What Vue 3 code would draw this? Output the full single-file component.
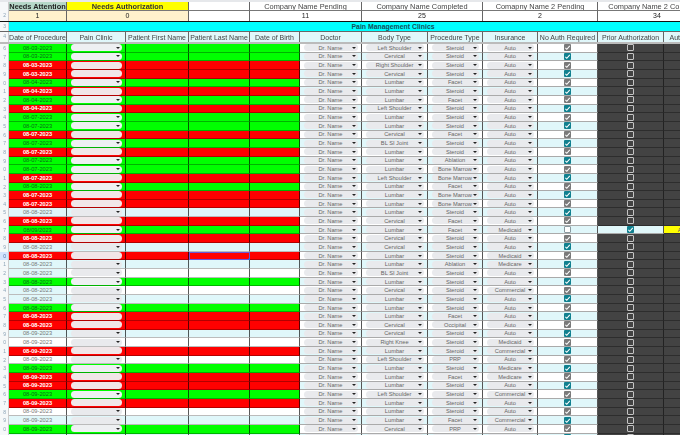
<script setup>
// status | date | body | procedure | insurance
const raw = `g|08-03-2023|Left Shoulder|Steroid|Auto
g|08-03-2023|Cervical|Steroid|Auto
r|08-03-2023|Right Shoulder|Steroid|Auto
r|08-03-2023|Cervical|Steroid|Auto
g|08-04-2023|Lumbar|Facet|Auto
r|08-04-2023|Lumbar|Steroid|Auto
g|08-04-2023|Lumbar|Facet|Auto
r|08-04-2023|Left Shoulder|Steroid|Auto
g|08-07-2023|Lumbar|Steroid|Auto
g|08-07-2023|Lumbar|Steroid|Auto
r|08-07-2023|Cervical|Facet|Auto
g|08-07-2023|BL SI Joint|Steroid|Auto
r|08-07-2023|Lumbar|Steroid|Auto
g|08-07-2023|Lumbar|Ablation|Auto
g|08-07-2023|Lumbar|Bone Marrow|Auto
r|08-07-2023|Left Shoulder|Bone Marrow|Auto
g|08-08-2023|Lumbar|Facet|Auto
r|08-07-2023|Lumbar|Bone Marrow|Auto
r|08-07-2023|Lumbar|Bone Marrow|Auto
b|08-08-2023|Lumbar|Steroid|Auto
r|08-08-2023|Cervical|Facet|Auto
g|08/09/2023|Lumbar|Facet|Medicaid
r|08-08-2023|Cervical|Steroid|Auto
b|08-08-2023|Cervical|Steroid|Auto
r|08-08-2023|Lumbar|Steroid|Medicaid
b|08-08-2023|Lumbar|Ablation|Medicare
t|08-08-2023|BL SI Joint|Steroid|Auto
g|08-08-2023|Lumbar|Steroid|Auto
t|08-08-2023|Cervical|Steroid|Commercial
b|08-08-2023|Lumbar|Steroid|Auto
g|08-08-2023|Lumbar|Steroid|Auto
r|08-08-2023|Lumbar|Facet|Auto
r|08-08-2023|Cervical|Occipital|Auto
b|08-09-2023|Cervical|Steroid|Auto
w|08-09-2023|Right Knee|Steroid|Medicaid
r|08-09-2023|Lumbar|Steroid|Commercial
w|08-09-2023|Left Shoulder|PRP|Auto
g|08-09-2023|Lumbar|Steroid|Medicare
r|08-09-2023|Lumbar|Facet|Medicare
r|08-09-2023|Lumbar|Steroid|Auto
g|08-09-2023|Left Shoulder|Steroid|Commercial
r|08-09-2023|Lumbar|Steroid|Auto
w|08-09-2023|Lumbar|Steroid|Auto
b|08-09-2023|Lumbar|Facet|Commercial
g|08-09-2023|Cervical|PRP|Auto
b|08-09-2023|Lumbar|Steroid|Auto`

const rows = raw.split('\n').map((line, i) => {
  const [status, date, body, proc, ins] = line.split('|')
  return { n: (i + 6) % 10, status, date, body, proc, ins, even: i % 2 === 1, special: i === 21, active: i === 24 }
})

const headers = ['Date of Procedure', 'Pain Clinic', 'Patient First Name', 'Patient Last Name', 'Date of Birth', 'Doctor', 'Body Type', 'Procedure Type', 'Insurance', 'No Auth Required', 'Prior Authorization', 'Authorization']
</script>

<template>
  <div class="sheet">
    <div class="inner">
      <div class="edge"></div>

      <div class="line top">
        <div class="num"></div>
        <div class="c attention">Needs Attention</div>
        <div class="c yellow s2">Needs Authorization</div>
        <div class="c"></div>
        <div class="c s2">Company Name Pending</div>
        <div class="c s2">Company Name Completed</div>
        <div class="c s2">Comapny Name 2 Pending</div>
        <div class="c s2">Company Name 2 Completed</div>
      </div>
      <div class="line counts">
        <div class="num">2</div>
        <div class="c cream">1</div>
        <div class="c cream s2">0</div>
        <div class="c"></div>
        <div class="c s2">11</div>
        <div class="c s2">25</div>
        <div class="c s2">2</div>
        <div class="c s2">34</div>
      </div>
      <div class="line banner">
        <div class="num">3</div>
        <div class="title">Pain Management Clinics</div>
      </div>
      <div class="line heads">
        <div class="num">4</div>
        <div v-for="h in headers" :key="h" class="c">{{ h }}</div>
      </div>

      <div v-for="(r, i) in rows" :key="i" class="line row" :class="[r.status, { even: r.even }]">
        <div class="num" :class="{ hot: r.active }">{{ r.n }}</div>
        <div class="cell date">{{ r.date }}</div>
        <div class="cell st">
          <div class="pill"><span></span><i class="arrow"></i></div>
        </div>
        <div class="cell st"></div>
        <div class="cell st" :class="{ picked: r.active }"><b v-if="r.active" class="handle"></b></div>
        <div class="cell st"></div>
        <div class="cell plain"><div class="pill"><span>Dr. Name</span><i class="arrow"></i></div></div>
        <div class="cell plain"><div class="pill"><span>{{ r.body }}</span><i class="arrow"></i></div></div>
        <div class="cell plain"><div class="pill"><span>{{ r.proc }}</span><i class="arrow"></i></div></div>
        <div class="cell plain"><div class="pill"><span>{{ r.ins }}</span><i class="arrow"></i></div></div>
        <div class="cell plain mid">
          <span class="box" :class="r.special ? 'empty' : r.even ? 'teal' : 'grey'">
            <svg v-if="!r.special" viewBox="0 0 8 8"><path d="M1.6 4.4 3.2 6 6.6 2.2" fill="none" stroke="#fff" stroke-width="1.2" /></svg>
          </span>
        </div>
        <div class="cell mid" :class="r.special ? 'plain' : 'dark'">
          <span class="box" :class="r.special ? 'teal' : 'hollow'">
            <svg v-if="r.special" viewBox="0 0 8 8"><path d="M1.6 4.4 3.2 6 6.6 2.2" fill="none" stroke="#fff" stroke-width="1.2" /></svg>
          </span>
        </div>
        <div class="cell mid" :class="r.special ? 'auth' : 'dark'">{{ r.special ? 'Approved' : '' }}</div>
      </div>
    </div>
  </div>
</template>

<style scoped>
.sheet {
  width: 680px;
  height: 435px;
  overflow: hidden;
  background: #fff;
  font-family: "Liberation Sans", Arial, sans-serif;
  color: #444;
}
.inner { width: 777px; filter: blur(0.4px); }
.edge { height: 2px; background: #e6e8eb; }
.line {
  display: grid;
  grid-template-columns: 9px 58px 59px 63px 61px 50px 62px 66px 55px 55px 60px 66px 53px 60px;
  box-sizing: border-box;
}
.num {
  background: #f6f8f9;
  color: #8aa2b5;
  font-size: 5px;
  line-height: 8px;
  text-align: right;
  padding-right: 2px;
  overflow: hidden;
  border-right: 1px solid #ccc;
}
.num.hot { background: #d3e3fd; color: #4a6fa5; }
.c {
  display: flex;
  align-items: center;
  justify-content: center;
  box-sizing: border-box;
  border-right: 1px solid #666;
  border-bottom: 1px solid #777;
  white-space: nowrap;
  overflow: hidden;
}
.s2 { grid-column: span 2; }

.top { height: 9px; font-size: 7.4px; color: #444; }
.counts { height: 10.5px; font-size: 7px; color: #222; border-bottom: 1px solid #111; }
.counts .c { border-bottom: 0; }
.attention { background: #b6d7c8; color: #222; font-weight: 600; }
.yellow { background: #ff0; color: #333; font-weight: 600; }
.cream { background: #fff2cc; }

.banner { height: 9.5px; }
.title {
  grid-column: 2 / -1;
  background: #0ff;
  color: #134f5c;
  font-size: 6.9px;
  font-weight: 700;
  line-height: 9.5px;
  text-align: center;
}

.heads { height: 13px; font-size: 7px; color: #444; border-bottom: 2px solid #bbb; border-top: 1px solid #666; }
.heads .c { background: #e0f7fa; border-bottom: 0; font-weight: 500; }

.row { height: 8.67px; }
.cell {
  display: flex;
  align-items: center;
  box-sizing: border-box;
  min-width: 0;
  border-right: 1px solid rgba(0, 0, 0, 0.65);
  border-bottom: 1px solid rgba(0, 0, 0, 0.3);
  font-size: 5.7px;
  white-space: nowrap;
  position: relative;
}
.mid { justify-content: center; }
.date { justify-content: center; }
.plain { background: #fff; color: #666; border-bottom-color: #aaa; border-right-color: #555; }
.even .plain { background: #e0f7fa; }

.g .date, .g .st { background: #0f0; }
.r .date, .r .st { background: #f00; }
.b .date, .b .st { background: #e0f7fa; border-bottom-color: #bbb; }
.w .date, .w .st, .t .st { background: #fff; border-bottom-color: #bbb; }
.t .date { background: #e0f7fa; border-bottom-color: #bbb; }
.g .date { color: #0a6a1a; }
.r .date { color: #fff; font-weight: 700; }
.b .date, .w .date, .t .date { color: #777; }

.pill {
  flex: 1;
  display: flex;
  align-items: center;
  height: 7px;
  margin: 0 3px 0 4px;
  padding: 0 2px 0 3px;
  min-width: 0;
  border-radius: 4px;
  background: #e9eaed;
}
.pill span { flex: 1; text-align: center; padding-left: 2px; }
.arrow {
  width: 0;
  height: 0;
  border-left: 2px solid transparent;
  border-right: 2px solid transparent;
  border-top: 2px solid #222;
}
.g .st .pill { background: #eef0f2; }
.r .st .pill { background: #f1e6e8; }
.r .st .arrow { border-top-color: #f1e6e8; }

.box {
  display: block;
  width: 7px;
  height: 7px;
  box-sizing: border-box;
  border-radius: 1px;
}
.box svg { display: block; width: 100%; height: 100%; }
.grey { background: #7a7a7a; }
.teal { background: #10808f; }
.empty { border: 1px solid #8a9aa0; background: #fff; }
.hollow { border: 1.2px solid #c4c4c4; }

.dark { background: #434343; border-right-color: #222; border-bottom-color: #2d2d2d; }
.auth { background: #ff0; color: #555; border-bottom-color: #333; }
.picked { outline: 1px solid #6a55d8; outline-offset: -1px; }
.handle {
  position: absolute;
  right: -2px;
  bottom: -2px;
  width: 3px;
  height: 3px;
  border-radius: 50%;
  background: #1a73e8;
}
</style>

<style>
html, body { margin: 0; overflow: hidden; background: #fff; }
</style>
